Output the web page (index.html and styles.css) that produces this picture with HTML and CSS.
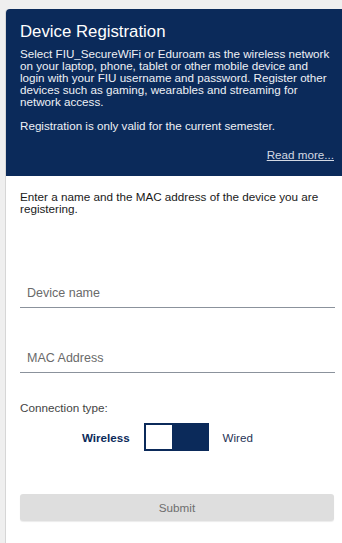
FILE: index.html
```html
<!DOCTYPE html>
<html lang="en">
<head>
<meta charset="utf-8">
<title>Device Registration</title>
<link rel="stylesheet" href="styles.css">
</head>
<body>
<div class="card">
  <header class="head">
    <h1 class="title">Device Registration</h1>
    <p class="intro">Select FIU_SecureWiFi or Eduroam as the wireless network on your laptop, phone, tablet or other mobile device and login with your FIU username and password. Register other devices such as gaming, wearables and streaming for network access.</p>
    <p class="note">Registration is only valid for the current semester.</p>
    <div class="more-row"><a class="more" href="#">Read more...</a></div>
  </header>
  <form class="form">
    <p class="lead">Enter a name and the MAC address of the device you are registering.</p>
    <input class="field first" type="text" placeholder="Device name">
    <input class="field second" type="text" placeholder="MAC Address">
    <div class="conn-label">Connection type:</div>
    <div class="toggle-row">
      <span class="opt opt-on">Wireless</span>
      <span class="switch"><span class="knob"></span></span>
      <span class="opt">Wired</span>
    </div>
    <button class="submit" type="button">Submit</button>
  </form>
</div>
</body>
</html>
```
FILE: styles.css
```css
html, body {
  margin: 0;
  padding: 0;
}
body {
  background: #efefef;
  font-family: "Liberation Sans", Arial, sans-serif;
  overflow: hidden;
}
.card {
  margin: 9px 0 0 5px;
  border-left: 1px solid #d6d6d6;
  background: #ffffff;
  border-top-left-radius: 4px;
  min-height: calc(100vh - 9px);
}
.head {
  background: #0b2a5a;
  color: #ffffff;
  padding: 13px 8px 15px 14px;
  border-top-left-radius: 4px;
}
.title {
  margin: 0;
  font-size: 16.8px;
  line-height: 20px;
  font-weight: normal;
}
.intro, .note {
  margin: 6px 0 0;
  font-size: 11.65px;
  line-height: 12px;
  color: #eef1f6;
}
.note {
  margin-top: 12px;
}
.more-row {
  margin-top: 17px;
  display: flex;
  justify-content: flex-end;
  line-height: 12px;
}
.more {
  font-size: 11.65px;
  color: #d3d9e3;
  text-decoration: underline;
}
.form {
  display: flex;
  flex-direction: column;
  padding: 15px 7px 20px 14px;
}
.lead {
  margin: 0;
  font-size: 11.7px;
  line-height: 12px;
  color: #1a1a1a;
}
.field {
  display: block;
  box-sizing: border-box;
  height: 30px;
  border: none;
  border-bottom: 1px solid #8b929c;
  padding: 0 7px;
  font-family: "Liberation Sans", Arial, sans-serif;
  font-size: 12.5px;
  background: transparent;
  outline: none;
  width: 315px;
}
.field::placeholder {
  color: #6a6a6a;
}
.field.first {
  margin-top: 63px;
}
.field.second {
  margin-top: 35px;
}
.conn-label {
  margin-top: 29px;
  font-size: 11.7px;
  line-height: 12px;
  color: #444444;
}
.toggle-row {
  margin-top: 9px;
  display: flex;
  align-items: center;
  padding-left: 62px;
  gap: 14px;
}
.opt {
  font-size: 11.6px;
  color: #1f3357;
}
.opt-on {
  font-weight: bold;
  color: #0b2a5a;
}
.switch {
  box-sizing: border-box;
  width: 65px;
  height: 28px;
  border: 2px solid #0b2a5a;
  background: #0b2a5a;
  display: flex;
}
.knob {
  width: 26px;
  height: 100%;
  background: #ffffff;
}
.submit {
  margin-top: 43px;
  width: 314px;
  height: 27px;
  border: none;
  border-radius: 3px;
  background: #dedede;
  box-shadow: 0 1px 1px rgba(0,0,0,0.08);
  font-family: "Liberation Sans", Arial, sans-serif;
  font-size: 11.7px;
  color: #6f6f6f;
}
```
